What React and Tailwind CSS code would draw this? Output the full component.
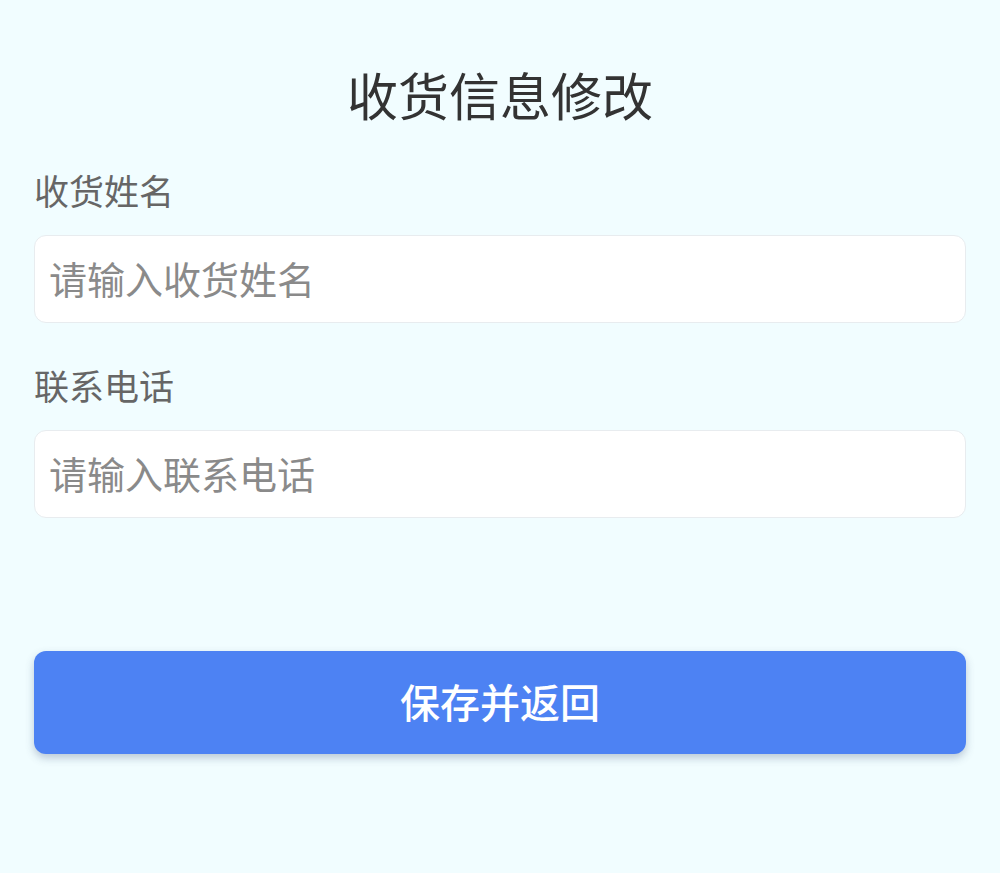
import React, { useState } from 'react';

const font = { fontFamily: '"Noto Sans CJK SC", "Noto Sans", sans-serif' };

const Field = ({ label, value, onChange, placeholder, className = '' }) => (
    <div className={className}>
        <div className="text-[35px] leading-[36px] text-[#666666]">{label}</div>
        <input
            type="text"
            value={value}
            onChange={(e) => onChange(e.target.value)}
            placeholder={placeholder}
            className="mt-[27px] block w-full h-[88px] pl-[14px] pr-[15px] pb-[4px] bg-white border border-[#e8ecef] rounded-[12px] text-[38px] text-[#333333] placeholder:text-[#8a8a8a] outline-none"
        />
    </div>
);

export default function App() {
    const [name, setName] = useState('');
    const [phone, setPhone] = useState('');

    return (
        <div className="min-h-screen bg-[#f1fdff] px-[34px] pt-[68px]" style={font}>
            <h1 className="text-center text-[51px] leading-[52px] text-[#333333]">收货信息修改</h1>

            <Field
                className="mt-[52px]"
                label="收货姓名"
                value={name}
                onChange={setName}
                placeholder="请输入收货姓名"
            />
            <Field
                className="mt-[44px]"
                label="联系电话"
                value={phone}
                onChange={setPhone}
                placeholder="请输入联系电话"
            />

            {/* save */}
            <button
                type="button"
                className="mt-[133px] block w-full h-[103px] pb-[4px] rounded-[12px] bg-[#4d82f3] text-white text-[40px] font-medium shadow-[0_4px_8px_rgba(60,80,120,0.3)]"
            >
                保存并返回
            </button>
        </div>
    );
}
